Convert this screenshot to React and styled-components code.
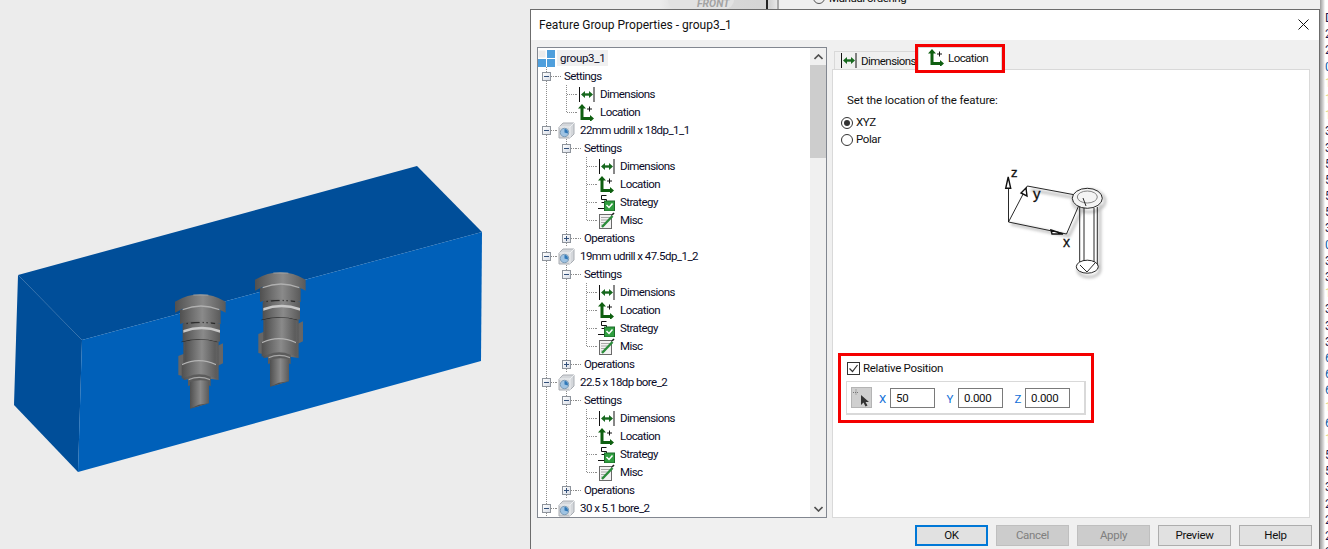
import React from "react";
import styled, { createGlobalStyle } from "styled-components";

const GlobalStyle = createGlobalStyle`
  html, body {
    margin: 0;
    padding: 0;
    background: #ececec;
  }
  * {
    box-sizing: border-box;
  }
`;

const Page = styled.div`
  display: flex;
  width: 1328px;
  height: 549px;
  overflow: hidden;
  font-family: Roboto, "Noto Sans", sans-serif;
  font-size: 11.5px;
  letter-spacing: -0.4px;
  color: #111;
`;

const Viewport = styled.div`
  flex: 0 0 530px;
  background: #ececec;
`;

const Center = styled.div`
  flex: 0 0 790px;
  display: flex;
  flex-direction: column;
`;

const BackStrip = styled.div`
  flex: 0 0 9px;
  display: flex;
  overflow: hidden;
  background: linear-gradient(90deg, #ececec 0, #ececec 130px, #dcdcdc 150px, #d4d4d4 240px, #efefef 250px);
`;

const Cube = styled.div`
  flex: 0 0 66px;
  margin-left: 138px;
  height: 9px;
  font-size: 10.5px;
  font-style: italic;
  font-weight: 700;
  line-height: 8px;
  letter-spacing: 0;
  color: #a3a3a3;
  background: #e2e2e2;
  border-radius: 0 0 10px 10px;
  padding-left: 29px;
  overflow: hidden;
`;

const Tick = styled.div`
  flex: 0 0 2px;
  height: 9px;
  margin-left: ${(p) => p.$gap}px;
  background: ${(p) => p.$color};
`;

const BackRadio = styled.div`
  flex: 0 0 12px;
  height: 12px;
  margin: -8px 0 0 34px;
  border: 1px solid #555;
  border-radius: 50%;
`;

const BackLabel = styled.div`
  margin: -10px 0 0 4px;
  line-height: 16px;
  white-space: nowrap;
`;

const Dialog = styled.div`
  flex: 1;
  display: flex;
  flex-direction: column;
  background: #f0f0f0;
  border: 1px solid #6c6c6c;
  border-bottom: 0;
`;

const TitleBar = styled.div`
  flex: 0 0 30px;
  display: flex;
  align-items: center;
  justify-content: space-between;
  padding: 0 10px 1px 8px;
  background: #fff;
  font-size: 12px;
  letter-spacing: 0;
`;

const Main = styled.div`
  flex: 0 0 469px;
  display: flex;
  margin-top: 7px;
  padding-left: 6px;
`;

const Tree = styled.div`
  flex: 0 0 290px;
  display: flex;
  border: 1px solid #828790;
  background: #fff;
  overflow: hidden;
`;

const TreeBody = styled.div`
  flex: 1;
  padding-top: 1px;
  overflow: hidden;
  letter-spacing: -0.55px;
`;

const Row = styled.div`
  display: flex;
  align-items: center;
  height: 18px;
  margin-left: -2px;
  white-space: nowrap;
  color: #0a0a28;
`;

const dots = "repeating-linear-gradient(90deg, #8c8c8c 0 1px, transparent 1px 2px)";
const vdots = "repeating-linear-gradient(180deg, #8c8c8c 0 1px, transparent 1px 2px)";

const cellBg = {
  blank: "none",
  pipe: `${vdots} 10px 0 / 1px 18px no-repeat`,
  tee: `${vdots} 10px 0 / 1px 18px no-repeat, ${dots} 11px 9px / 9px 1px no-repeat`,
  corner: `${vdots} 10px 0 / 1px 10px no-repeat, ${dots} 11px 9px / 9px 1px no-repeat`,
  box: `${vdots} 10px 0 / 1px 18px no-repeat, ${dots} 11px 9px / 9px 1px no-repeat`,
};

const Cell = styled.div`
  flex: 0 0 20px;
  height: 18px;
  display: flex;
  align-items: center;
  justify-content: center;
  background: ${(p) => cellBg[p.$kind]};
`;

const Expander = styled.div`
  width: 9px;
  height: 9px;
  margin-left: 1px;
  border: 1px solid #8e949c;
  background:
    ${(p) => (p.$open ? "none" : "linear-gradient(#33507a, #33507a) 3px 1px / 1px 5px no-repeat")},
    linear-gradient(#33507a, #33507a) 1px 3px / 5px 1px no-repeat,
    linear-gradient(135deg, #fff, #d8dde6);
`;

const Stub = styled.div`
  flex: 0 0 ${(p) => p.$width}px;
  height: 1px;
  margin-top: 1px;
  background: ${dots};
`;

const IconSlot = styled.div`
  flex: 0 0 17px;
  height: 17px;
  margin-right: 5px;
  display: flex;
`;

const RootIconSlot = styled(IconSlot)`
  margin: 0 2px 0 2px;
`;

const PlainLabel = styled.span`
  margin-left: ${(p) => p.$left || 0}px;
`;

const RootLabel = styled.span`
  padding: 0 3px;
  line-height: 16px;
  letter-spacing: -0.3px;
  background: #f0f0f0;
`;

const Scrollbar = styled.div`
  flex: 0 0 16px;
  display: flex;
  flex-direction: column;
  background: #f0f0f0;
`;

const ScrollArrow = styled.div`
  flex: 0 0 17px;
  display: flex;
  align-items: center;
  justify-content: center;
`;

const ScrollThumb = styled.div`
  flex: 0 0 93px;
  background: #cdcdcd;
`;

const ScrollTrack = styled.div`
  flex: 1;
`;

const TabColumn = styled.div`
  flex: 0 0 478px;
  margin-left: 5px;
  display: flex;
  flex-direction: column;
`;

const TabBar = styled.div`
  flex: 0 0 22px;
  display: flex;
  align-items: flex-end;
  padding-left: 2px;
  position: relative;
  z-index: 1;
  margin-bottom: -1px;
`;

const Tab = styled.div`
  display: flex;
  align-items: center;
  gap: ${(p) => (p.$active ? 3 : 4)}px;
  height: ${(p) => (p.$active ? 23 : 19)}px;
  width: ${(p) => (p.$active ? 84 : 82)}px;
  margin-left: ${(p) => (p.$active ? 2 : 0)}px;
  padding: ${(p) => (p.$active ? "0 0 3px 9px" : "0 0 0 5px")};
  background: ${(p) => (p.$active ? "#fff" : "#f0f0f0")};
  border: 1px solid #d9d9d9;
  border-bottom: ${(p) => (p.$active ? "0" : "1px solid #d9d9d9")};
  outline: ${(p) => (p.$active ? "3px solid #f40000" : "none")};
  white-space: nowrap;
  letter-spacing: -0.55px;
  svg {
    flex: 0 0 17px;
  }
`;

const TabPage = styled.div`
  flex: 1;
  padding: 22px 0 0 8px;
  background: #fff;
  border: 1px solid #d9d9d9;
`;

const Heading = styled.div`
  height: 16px;
  line-height: 16px;
  margin-left: 6px;
  letter-spacing: -0.1px;
`;

const RadioRow = styled.label`
  display: flex;
  align-items: center;
  gap: 3px;
  height: 17px;
  line-height: 17px;
  margin-top: ${(p) => p.$top || 0}px;
`;

const Radio = styled.span`
  width: 12px;
  height: 12px;
  border-radius: 50%;
  border: 1px solid #333;
  display: flex;
  align-items: center;
  justify-content: center;
  &::after {
    content: "";
    width: 6px;
    height: 6px;
    border-radius: 50%;
    background: ${(p) => (p.$checked ? "#333" : "transparent")};
  }
`;

const Diagram = styled.svg`
  display: block;
  width: 140px;
  height: 125px;
  margin: 12px 0 0 138px;
`;

const RelativeBox = styled.div`
  width: 250px;
  height: 64px;
  margin-top: 71px;
  padding: 5px 5px 0;
  outline: 3px solid #f40000;
  letter-spacing: -0.3px;
`;

const CheckRow = styled.div`
  display: flex;
  align-items: center;
  gap: 3px;
  height: 14px;
  margin-left: 1px;
`;

const CheckBox = styled.span`
  flex: 0 0 13px;
  height: 13px;
  border: 1px solid #333;
  display: flex;
`;

const Coords = styled.div`
  display: flex;
  align-items: center;
  width: 240px;
  height: 34px;
  margin-top: 6px;
  padding-left: 4px;
  border: 1px solid #d9d9d9;
  border-width: 1px 2px 2px 1px;
`;

const PickButton = styled.div`
  flex: 0 0 21px;
  height: 21px;
  display: flex;
  background: #cfcfcf;
  border: 1px solid #b4b4b4;
`;

const AxisLabel = styled.span`
  flex: 0 0 ${(p) => p.$width}px;
  padding: 2px ${(p) => p.$right}px 0 0;
  color: #0f6fd8;
  text-align: right;
`;

const Field = styled.div`
  flex: 0 0 45px;
  height: 20px;
  padding-left: 5px;
  line-height: 18px;
  background: #fff;
  border: 1px solid #7a7a7a;
`;

const Footer = styled.div`
  flex: 0 0 21px;
  display: flex;
  justify-content: flex-end;
  gap: 8px;
  margin-top: 7px;
  margin-right: 7px;
  letter-spacing: -0.3px;
`;

const Button = styled.div`
  flex: 0 0 73px;
  height: 21px;
  display: flex;
  align-items: center;
  justify-content: center;
  padding-bottom: 1px;
  background: ${(p) => (p.$disabled ? "#cccccc" : "#e1e1e1")};
  color: ${(p) => (p.$disabled ? "#7f7f7f" : "#111")};
  border: ${(p) => (p.$default ? "2px solid #0078d7" : `1px solid ${p.$disabled ? "#bfbfbf" : "#adadad"}`)};
`;

const SideList = styled.div`
  flex: 0 0 8px;
  padding: 10px 0 0 5px;
  overflow: hidden;
  background: linear-gradient(90deg, #9c9c9c 0, #e4e4e4 4px, #fff 5px);
  line-height: 16.2px;
  font-size: 12px;
`;

const SideEntry = styled.div`
  height: 16.2px;
  color: ${(p) => p.$color};
`;

const DimensionsIcon = () => (
  <svg width="17" height="17" viewBox="0 0 17 17">
    <path d="M1.5 1v15M16 1v15" stroke="#111" fill="none" />
    <path d="M5 8.5h8" stroke="#17691f" strokeWidth="2.4" />
    <path d="M3 8.5l4-3.5v7zM15 8.5l-4-3.5v7z" fill="#17691f" />
  </svg>
);

const LocationIcon = () => (
  <svg width="17" height="17" viewBox="0 0 17 17">
    <path d="M4 4v10.5h9" stroke="#0e5f10" strokeWidth="3" fill="none" />
    <path d="M4 0l4 4.5H0zM16 14.5l-4 3.5v-7z" fill="#0e5f10" />
    <path d="M11.5 2.5v5M9 5h5" stroke="#111" />
  </svg>
);

const StrategyIcon = () => (
  <svg width="17" height="17" viewBox="0 0 17 17">
    <path d="M3.5 1.5h5M3.5 1.5v4h5v3M3.5 8.5h3M0 14.5h6" stroke="#111" fill="none" />
    <rect x="6.5" y="7" width="10" height="10" fill="#2f9e3f" stroke="#1d6b2a" />
    <path d="M8.5 11l2.5 2.5 3.5-4" stroke="#fff" strokeWidth="1.5" fill="none" />
  </svg>
);

const MiscIcon = () => (
  <svg width="17" height="17" viewBox="0 0 17 17">
    <rect x="1.5" y="2.5" width="12" height="14" fill="#f2f2f2" stroke="#6a6a6a" />
    <path d="M3 5.5h9M3 8h7M3 10.5h5M3 13h4" stroke="#a8a8a8" />
    <path d="M4 15L14.5 4" stroke="#2a8c3a" strokeWidth="2.4" />
    <path d="M14 3l2-2" stroke="#222" strokeWidth="1.6" />
  </svg>
);

const FeatureIcon = () => (
  <svg width="17" height="17" viewBox="0 0 17 17">
    <path d="M1 5l4-4h11v11l-4 4H1z" fill="#d4d7db" stroke="#a9adb3" />
    <path d="M1 5h11v11M12 5l4-4" stroke="#eef0f2" fill="none" />
    <circle cx="6.5" cy="10.5" r="4.2" fill="#9fc3e2" stroke="#7d9db8" />
    <path d="M6.5 10.5V7a3.5 3.5 0 0 1 3.3 4.6z" fill="#2f78b8" />
  </svg>
);

const RootIcon = () => (
  <svg width="17" height="17" viewBox="0 0 17 17">
    <rect x="0.5" y="0.5" width="7" height="7" fill="#ececec" />
    <rect x="9" y="0" width="8" height="8" fill="#4f9fdc" />
    <rect x="0" y="9" width="8" height="8" fill="#4f9fdc" />
    <rect x="9" y="9" width="8" height="8" fill="#4f9fdc" />
  </svg>
);

const icons = {
  dim: <DimensionsIcon />,
  loc: <LocationIcon />,
  strat: <StrategyIcon />,
  misc: <MiscIcon />,
  feature: <FeatureIcon />,
};

const featureRows = (name) => [
  { cells: ["minus"], icon: "feature", label: name },
  { cells: ["pipe", "minus"], label: "Settings" },
  { cells: ["pipe", "pipe", "tee"], icon: "dim", label: "Dimensions" },
  { cells: ["pipe", "pipe", "tee"], icon: "loc", label: "Location" },
  { cells: ["pipe", "pipe", "tee"], icon: "strat", label: "Strategy" },
  { cells: ["pipe", "pipe", "corner"], icon: "misc", label: "Misc" },
  { cells: ["pipe", "plus"], label: "Operations" },
];

const rows = [
  { cells: ["minus"], label: "Settings" },
  { cells: ["pipe", "tee"], icon: "dim", label: "Dimensions" },
  { cells: ["pipe", "corner"], icon: "loc", label: "Location" },
  ...featureRows("22mm udrill x 18dp_1_1"),
  ...featureRows("19mm udrill x 47.5dp_1_2"),
  ...featureRows("22.5 x 18dp bore_2"),
  { cells: ["minus"], icon: "feature", label: "30 x 5.1 bore_2" },
];

const TreeRow = ({ row }) => (
  <Row>
    {row.cells.map((kind, i) =>
      kind === "minus" || kind === "plus" ? (
        <Cell key={i} $kind="box">
          <Expander $open={kind === "minus"} />
        </Cell>
      ) : (
        <Cell key={i} $kind={kind} />
      )
    )}
    {row.icon ? (
      <>
        <Stub $width={2} />
        <IconSlot>{icons[row.icon]}</IconSlot>
        <PlainLabel>{row.label}</PlainLabel>
      </>
    ) : (
      <>
        <Stub $width={6} />
        <PlainLabel $left={2}>{row.label}</PlainLabel>
      </>
    )}
  </Row>
);

// one tool in the coordinates of a 3x crop, drawn as stacked turned sections
const section = (x1, x2, y1, y2, bow, fill, extra) => (
  <path
    d={`M${x1} ${y1}Q${(x1 + x2) / 2} ${y1 + bow} ${x2} ${y1}L${x2} ${y2}Q${(x1 + x2) / 2} ${y2 + bow} ${x1} ${y2}Z`}
    fill={fill}
    {...extra}
  />
);

const ToolBody = ({ id }) => {
  const fill = `url(#${id})`;
  return (
    <g>
      <path d="M55 288L76 280V350L55 345ZM165 262L189 250V310L165 322Z" fill="#666" />
      {section(70, 176, 130, 360, -10, fill)}
      {section(45, 197, 125, 158, -44, fill)}
      {section(100, 145, 104, 106, 0, "#c4c4c4")}
      {section(60, 182, 150, 192, -22, fill)}
      {section(68, 178, 147, 151, -22, "#b0b0b0")}
      {section(68, 180, 192, 245, -18, fill)}
      {section(80, 165, 190, 191, -6, "none", { stroke: "#1c1c1c", strokeWidth: 2, strokeDasharray: "3 9 26 10 4 8" })}
      {section(70, 180, 210, 218, -20, "#c8c8c8")}
      {section(64, 172, 245, 247, -14, "#222")}
      {section(75, 167, 246, 312, -14, fill)}
      {section(65, 170, 312, 356, -24, fill)}
      {section(66, 168, 312, 316, -24, "#b4b4b4")}
      {section(84, 152, 350, 378, -14, "#5c5c5c")}
      {section(86, 150, 357, 361, -14, "#a8a8a8")}
      <path d="M90 366Q118 356 147 364V430L90 446Z" fill={fill} />
      <path d="M90 446L147 430L116 434Z" fill="#4e4e4e" />
    </g>
  );
};

const BlueBlock = () => (
  <svg width="530" height="549" viewBox="0 0 530 549" display="block">
    <defs>
      <linearGradient id="steel" x1="0" x2="1" y1="0" y2="0">
        <stop offset="0" stopColor="#505050" />
        <stop offset="0.55" stopColor="#8a8a8a" />
        <stop offset="1" stopColor="#5a5a5a" />
      </linearGradient>
    </defs>
    <polygon points="18,275 417,166 482,232 82,340" fill="#004e99" />
    <polygon points="18,275 82,340 78,472 14,405" fill="#004e99" />
    <polygon points="82,340 482,232 481,361 78,472" fill="#0060b9" />
    <g transform="translate(160 260) scale(0.3333)">
      <ToolBody id="steel" />
      <g transform="translate(240 -66)">
        <ToolBody id="steel" />
      </g>
    </g>
  </svg>
);

const CylinderDiagram = () => (
  <Diagram viewBox="0 0 140 125">
    <defs>
      <filter id="soft" x="-30%" y="-30%" width="160%" height="160%">
        <feGaussianBlur stdDeviation="1.6" />
      </filter>
    </defs>
    <g filter="url(#soft)" stroke="#aaa" strokeWidth="2.5" fill="none" opacity="0.8">
      <path d="M32 64L90 76L106 44M52 30L98 38M121 44V110" />
      <ellipse cx="110" cy="41" rx="16" ry="11" />
      <ellipse cx="110" cy="110" rx="11" ry="7" />
    </g>
    <g stroke="#111" fill="none" strokeWidth="0.9">
      <path d="M29.5 62V28M29.5 62L48.3 26M29.5 62L87.5 74L103 38M48.3 26L96.7 35" />
      <ellipse cx="108.3" cy="38.3" rx="15" ry="10" fill="#f4f4f4" />
      <ellipse cx="108.3" cy="37" rx="10" ry="6" stroke="#777" />
      <path d="M100.7 47V107M118.3 47V107M105 48V107M115 48V107M104 38L107 46" />
      <ellipse cx="108.3" cy="106.7" rx="11" ry="6.5" fill="#fff" />
      <path d="M101 105L108 112L116 103" />
    </g>
    <g stroke="#111" fill="#fff" strokeWidth="1.4">
      <path d="M29.2 17L31.7 28.3H26.7Z" />
      <path d="M47 28L48 36L42 33Z" />
      <path d="M72 70L84 74L73 74Z" />
    </g>
    <g fontFamily="Liberation Sans, sans-serif" fill="#111" stroke="#111" strokeWidth="0.3">
      <text x="32" y="17" fontSize="13">z</text>
      <text x="54" y="39" fontSize="15">y</text>
      <text x="84" y="87" fontSize="14">x</text>
    </g>
  </Diagram>
);

const sideValues = "D220111335555303313336661615532222".split("");
const sideColor = (c) => (c === "1" ? "#e5d88a" : c === "0" || c === "6" ? "#0f5fa8" : "#1a1a50");

export default function App() {
  return (
    <Page>
      <GlobalStyle />
      <Viewport>
        <BlueBlock />
      </Viewport>
      <Center>
        <BackStrip>
          <Cube>FRONT</Cube>
          <Tick $gap={32} $color="#222" />
          <Tick $gap={9} $color="#aaa" />
          <BackRadio />
          <BackLabel>Manual ordering</BackLabel>
        </BackStrip>
        <Dialog>
          <TitleBar>
            <span>Feature Group Properties - group3_1</span>
            <svg width="11" height="11" viewBox="0 0 11 11">
              <path d="M0.5 0.5l10 10M10.5 0.5l-10 10" stroke="#111" fill="none" />
            </svg>
          </TitleBar>
          <Main>
            <Tree>
              <TreeBody>
                <Row>
                  <RootIconSlot>
                    <RootIcon />
                  </RootIconSlot>
                  <RootLabel>group3_1</RootLabel>
                </Row>
                {rows.map((row, i) => (
                  <TreeRow key={i} row={row} />
                ))}
              </TreeBody>
              <Scrollbar>
                <ScrollArrow>
                  <svg width="9" height="6" viewBox="0 0 9 6">
                    <path d="M0.5 5L4.5 1L8.5 5" stroke="#505050" strokeWidth="1.6" fill="none" />
                  </svg>
                </ScrollArrow>
                <ScrollThumb />
                <ScrollTrack />
                <ScrollArrow>
                  <svg width="9" height="6" viewBox="0 0 9 6">
                    <path d="M0.5 1L4.5 5L8.5 1" stroke="#505050" strokeWidth="1.6" fill="none" />
                  </svg>
                </ScrollArrow>
              </Scrollbar>
            </Tree>
            <TabColumn>
              <TabBar>
                <Tab>
                  <DimensionsIcon />
                  Dimensions
                </Tab>
                <Tab $active>
                  <LocationIcon />
                  Location
                </Tab>
              </TabBar>
              <TabPage>
                <Heading>Set the location of the feature:</Heading>
                <RadioRow $top={6}>
                  <Radio $checked />
                  XYZ
                </RadioRow>
                <RadioRow>
                  <Radio />
                  Polar
                </RadioRow>
                <CylinderDiagram />
                <RelativeBox>
                  <CheckRow>
                    <CheckBox>
                      <svg width="11" height="11" viewBox="0 0 11 11">
                        <path d="M1.5 5.5L4.5 8.5L9.5 2" stroke="#333" strokeWidth="1.2" fill="none" />
                      </svg>
                    </CheckBox>
                    Relative Position
                  </CheckRow>
                  <Coords>
                    <PickButton>
                      <svg width="19" height="19" viewBox="0 0 19 19">
                        <path d="M4 1.5v6M1 4.5h6" stroke="#777" strokeDasharray="1 1" fill="none" />
                        <path d="M9 7l0 10l2.5-2.5l2 4l2-1l-2-3.5h3.5z" fill="#333" />
                      </svg>
                    </PickButton>
                    <AxisLabel $width={18} $right={4}>X</AxisLabel>
                    <Field>50</Field>
                    <AxisLabel $width={23} $right={5}>Y</AxisLabel>
                    <Field>0.000</Field>
                    <AxisLabel $width={22} $right={4}>Z</AxisLabel>
                    <Field>0.000</Field>
                  </Coords>
                </RelativeBox>
              </TabPage>
            </TabColumn>
          </Main>
          <Footer>
            <Button $default>OK</Button>
            <Button $disabled>Cancel</Button>
            <Button $disabled>Apply</Button>
            <Button>Preview</Button>
            <Button>Help</Button>
          </Footer>
        </Dialog>
      </Center>
      <SideList>
        {sideValues.map((c, i) => (
          <SideEntry key={i} $color={sideColor(c)}>
            {c}
          </SideEntry>
        ))}
      </SideList>
    </Page>
  );
}
